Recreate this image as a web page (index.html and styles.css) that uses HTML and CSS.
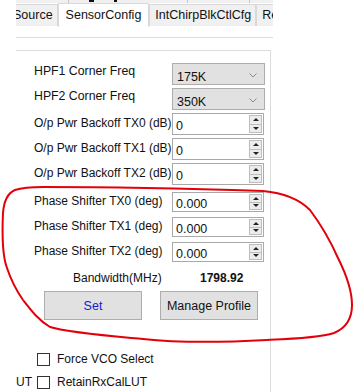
FILE: index.html
```html
<!DOCTYPE html>
<html lang="en">
<head>
  <meta charset="UTF-8" />
  <title>SensorConfig</title>
  <link rel="stylesheet" href="styles.css">
</head>
<body>

  <div class="strip">
    <span class="tick t1"></span>
    <span class="blob b1"></span>
    <span class="blob b2"></span>
    <span class="tick t2"></span>
    <span class="tick t3"></span>
  </div>

  <div class="tabs">
    <div class="tabrow">
      <div class="tab">Source</div>
      <div class="tab active">SensorConfig</div>
      <div class="tab">IntChirpBlkCtlCfg</div>
      <div class="tab">Re</div>
    </div>
  </div>

  <div class="panel">
    <div class="group">

      <div class="row">
        <span class="label up">HPF1 Corner Freq</span>
        <div class="combo">
          <span>175K</span>
          <svg class="chev" width="8" height="5" viewBox="0 0 8 5"><polyline points="0.5,0.5 4,4 7.5,0.5" fill="none" stroke="#8a8a8a" stroke-width="1"/></svg>
        </div>
      </div>
      <div class="row">
        <span class="label up">HPF2 Corner Freq</span>
        <div class="combo">
          <span>350K</span>
          <svg class="chev" width="8" height="5" viewBox="0 0 8 5"><polyline points="0.5,0.5 4,4 7.5,0.5" fill="none" stroke="#8a8a8a" stroke-width="1"/></svg>
        </div>
      </div>

      <div class="row">
        <span class="label">O/p Pwr Backoff TX0 (dB)</span>
        <div class="spin"><span class="val">0</span><span class="btns"><i class="a-up"></i><i class="a-dn"></i></span></div>
      </div>
      <div class="row">
        <span class="label">O/p Pwr Backoff TX1 (dB)</span>
        <div class="spin"><span class="val">0</span><span class="btns"><i class="a-up"></i><i class="a-dn"></i></span></div>
      </div>
      <div class="row">
        <span class="label">O/p Pwr Backoff TX2 (dB)</span>
        <div class="spin"><span class="val">0</span><span class="btns"><i class="a-up"></i><i class="a-dn"></i></span></div>
      </div>

      <div class="row phase first">
        <span class="label">Phase Shifter TX0 (deg)</span>
        <div class="spin"><span class="val">0.000</span><span class="btns"><i class="a-up"></i><i class="a-dn"></i></span></div>
      </div>
      <div class="row phase">
        <span class="label">Phase Shifter TX1 (deg)</span>
        <div class="spin"><span class="val">0.000</span><span class="btns"><i class="a-up"></i><i class="a-dn"></i></span></div>
      </div>
      <div class="row phase">
        <span class="label">Phase Shifter TX2 (deg)</span>
        <div class="spin"><span class="val">0.000</span><span class="btns"><i class="a-up"></i><i class="a-dn"></i></span></div>
      </div>

      <div class="bw">
        <span class="bw-label">Bandwidth(MHz)</span>
        <strong class="bw-val">1798.92</strong>
      </div>

      <div class="actions">
        <button class="btn set">Set</button>
        <button class="btn">Manage Profile</button>
      </div>

      <div class="check">
        <span class="box"></span>
        <span>Force VCO Select</span>
      </div>
      <div class="check second">
        <span class="cut">UT</span>
        <span class="box"></span>
        <span>RetainRxCalLUT</span>
      </div>

    </div>
  </div>

  <!-- red marker drawn over the screenshot -->
  <svg class="marker" width="353" height="392" viewBox="0 0 353 392">
    <path d="M 43,187 C 90,187 170,188 263,191 C 285,193 300,200 310,210 C 322,226 330,240 338,258 C 346,274 352,292 352,305 C 352,318 346,328 334,333 C 318,338 290,339 267,340 C 230,342 180,343 143,339 C 110,336 70,333 50,327 C 38,320 30,309 23,300 C 16,290 11,280 7,268 C 2,255 2,235 3,213 C 4,200 8,193 15,190 C 24,187 33,187 43,187"
          fill="none" stroke="#e3000b" stroke-width="2" stroke-linecap="round" stroke-linejoin="round"/>
  </svg>

</body>
</html>
```

FILE: styles.css
```css
:root {
  --borda: #d9d9d9;
  --cinza: #e1e1e1;
  --cinza-borda: #adadad;
  --texto: #111;
}

body {
  margin: 0;
  width: 353px;
  height: 392px;
  overflow: hidden;
  position: relative;
  background: #fff;
  font-family: "Liberation Sans", Arial, sans-serif;
  font-size: 12px;
  color: var(--texto);
}

/* bottom of the upper tab row */
.strip {
  height: 3px;
  margin-left: 16px;
  width: 257px;
  background: #f0f0f0;
  display: flex;
}

.tick {
  width: 1px;
  background: #c8c8c8;
}

.t1 { margin-left: 52px; }
.t2 { margin-left: 70px; }
.t3 { margin-left: 61px; }

.blob {
  height: 2px;
  background: #111;
}

.b1 { width: 5px; margin-left: 20px; }
.b2 { width: 3px; margin-left: 20px; }

/* tabs */
.tabs {
  margin-left: 16px;
  width: 257px;
  height: 24px;
  overflow: hidden;
}

.tabrow {
  display: flex;
  align-items: flex-start;
  height: 24px;
  margin-left: -9px;
}

.tab {
  height: 22px;
  margin-top: 1px;
  line-height: 21px;
  padding: 0 4px 0 5px;
  background: #f0f0f0;
  border: 1px solid var(--borda);
  border-bottom: none;
  box-sizing: border-box;
  white-space: nowrap;
  font-size: 12.5px;
}

.tab.active {
  height: 24px;
  margin-top: 0;
  line-height: 22px;
  padding: 0 7px;
  background: #fff;
}

/* panel and group box */
.panel {
  margin-top: 10px;
  margin-left: 16px;
  width: 257px;
  border-top: 1px solid #dcdcdc;
}

.group {
  margin-top: 12px;
  width: 255px;
  height: 360px;
  border-top: 1px solid #dcdcdc;
  border-right: 1px solid #dcdcdc;
  padding: 12px 0 0 18px;
  box-sizing: border-box;
}

.row {
  display: flex;
  align-items: center;
  height: 22px;
  margin-bottom: 3px;
}

.row.phase {
  height: 20px;
  margin-bottom: 5px;
}

.row.phase.first {
  margin-top: 7px;
}

.label {
  width: 138px;
  white-space: nowrap;
  padding-bottom: 3px;
  font-size: 12px;
}

.label.up {
  align-self: flex-start;
  padding-top: 1px;
  font-size: 12.3px;
}

.combo {
  width: 93px;
  height: 22px;
  box-sizing: border-box;
  background: var(--cinza);
  border: 1px solid var(--cinza-borda);
  display: flex;
  align-items: center;
  justify-content: space-between;
  padding: 5px 7px 0 4px;
  font-size: 12.5px;
}

.chev {
  margin-top: -3px;
}

.spin {
  width: 92px;
  height: 100%;
  box-sizing: border-box;
  border: 1px solid #a9a9a9;
  display: flex;
  align-items: center;
  justify-content: space-between;
  padding: 1px 1px 1px 3px;
  font-size: 12.5px;
}

.val {
  padding-top: 3px;
}

.btns {
  width: 13px;
  height: 100%;
  max-height: 18px;
  box-sizing: border-box;
  border: 1px solid #bdbdbd;
  background: #ececec;
  display: flex;
  flex-direction: column;
}

.btns i {
  flex: 1;
  display: flex;
  align-items: center;
  justify-content: center;
}

.btns i + i {
  border-top: 1px solid #bdbdbd;
}

.a-up::before,
.a-dn::before {
  content: "";
  border-left: 3px solid transparent;
  border-right: 3px solid transparent;
}

.a-up::before { border-bottom: 3px solid #222; }
.a-dn::before { border-top: 3px solid #222; }

/* bandwidth */
.bw {
  display: flex;
  align-items: center;
  margin-top: 8px;
  height: 16px;
}

.bw-label {
  margin-left: 39px;
  width: 127px;
  font-size: 12px;
}

.bw-val {
  font-size: 12px;
}

/* buttons */
.actions {
  display: flex;
  gap: 18px;
  margin: 5px 0 0 10px;
}

.btn {
  width: 98px;
  height: 29px;
  background: var(--cinza);
  border: 1px solid var(--cinza-borda);
  font-family: inherit;
  font-size: 12.5px;
  color: var(--texto);
  padding: 0;
}

.btn.set {
  color: #1a1ad0;
}

/* checkboxes */
.check {
  display: flex;
  align-items: center;
  gap: 7px;
  margin: 32px 0 0 3px;
  font-size: 12px;
}

.check.second {
  margin: 9px 0 0 -18px;
}

.cut {
  width: 14px;
}

.box {
  width: 13px;
  height: 13px;
  box-sizing: border-box;
  border: 1px solid #333;
  background: #fff;
}

.marker {
  position: absolute;
  top: 0;
  left: 0;
  pointer-events: none;
}
```
